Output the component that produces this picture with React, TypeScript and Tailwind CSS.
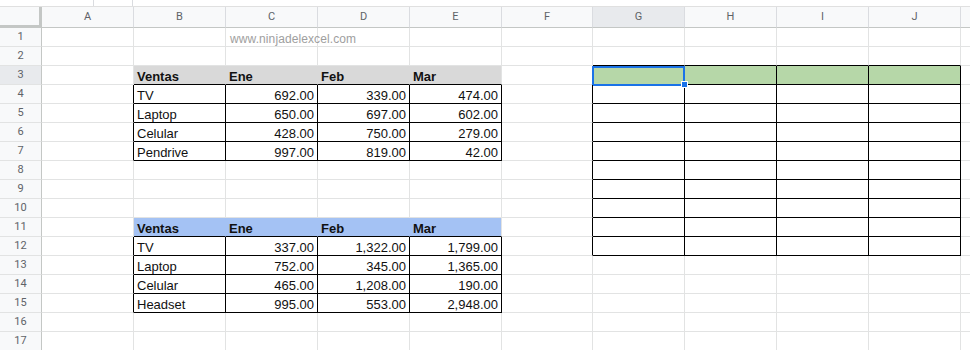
import React from 'react';

type Fill = 'gray' | 'blue' | 'green';
type Cell = { v: string; bold?: boolean; right?: boolean; muted?: boolean };

const COLS = ['A', 'B', 'C', 'D', 'E', 'F', 'G', 'H', 'I', 'J', 'K'];
const WIDTHS = ['w-[92px]', 'w-[92px]', 'w-[92px]', 'w-[92px]', 'w-[92px]', 'w-[91px]', 'w-[92px]', 'w-[92px]', 'w-[92px]', 'w-[92px]', 'w-[92px]'];
const ROWS = Array.from({ length: 17 }, (_, i) => i + 1);

const RIGHT = {
  black: 'border-r-black',
  grid: 'border-r-[#e2e3e3]',
  gray: 'border-r-[#d9d9d9]',
  blue: 'border-r-[#a4c2f4]',
  green: 'border-r-[#b6d7a8]',
};
const BOTTOM = {
  black: 'border-b-black',
  grid: 'border-b-[#e2e3e3]',
  gray: 'border-b-[#d9d9d9]',
  blue: 'border-b-[#a4c2f4]',
  green: 'border-b-[#b6d7a8]',
};
const BG = { gray: 'bg-[#d9d9d9]', blue: 'bg-[#a4c2f4]', green: 'bg-[#b6d7a8]' };

// bordered ranges, column index A = 0
const boxes = [
  { r1: 4, r2: 7, c1: 1, c2: 4 },
  { r1: 12, r2: 15, c1: 1, c2: 4 },
  { r1: 3, r2: 12, c1: 6, c2: 9 },
];
const inBox = (r: number, c: number) => boxes.some((b) => r >= b.r1 && r <= b.r2 && c >= b.c1 && c <= b.c2);

const fillOf = (r: number, c: number): Fill | null => {
  if (r === 3 && c >= 1 && c <= 4) return 'gray';
  if (r === 11 && c >= 1 && c <= 4) return 'blue';
  if (r === 3 && c >= 6 && c <= 9) return 'green';
  return null;
};

const cells: Record<string, Cell> = {
  C1: { v: 'www.ninjadelexcel.com', muted: true },
};

const addTable = (top: number, items: [string, string, string, string][]) => {
  ['Ventas', 'Ene', 'Feb', 'Mar'].forEach((h, i) => {
    cells[COLS[i + 1] + top] = { v: h, bold: true };
  });
  items.forEach((row, ri) => {
    row.forEach((v, ci) => {
      cells[COLS[ci + 1] + (top + 1 + ri)] = { v, right: ci > 0 };
    });
  });
};

addTable(3, [
  ['TV', '692.00', '339.00', '474.00'],
  ['Laptop', '650.00', '697.00', '602.00'],
  ['Celular', '428.00', '750.00', '279.00'],
  ['Pendrive', '997.00', '819.00', '42.00'],
]);
addTable(11, [
  ['TV', '337.00', '1,322.00', '1,799.00'],
  ['Laptop', '752.00', '345.00', '1,365.00'],
  ['Celular', '465.00', '1,208.00', '190.00'],
  ['Headset', '995.00', '553.00', '2,948.00'],
]);

const font = { fontFamily: '"Liberation Sans", Arial, sans-serif' };

const SheetCell = ({ r, c }: { r: number; c: number }) => {
  const fill = fillOf(r, c);
  const right = inBox(r, c) || inBox(r, c + 1) ? RIGHT.black : fill && fillOf(r, c + 1) === fill ? RIGHT[fill] : RIGHT.grid;
  const bottom = inBox(r, c) || inBox(r + 1, c) ? BOTTOM.black : fill && fillOf(r + 1, c) === fill ? BOTTOM[fill] : BOTTOM.grid;
  const cell = cells[COLS[c] + r];
  const selected = r === 3 && c === 6;

  return (
    <div
      className={`relative shrink-0 h-[19px] border-r border-b flex items-end px-[3px] whitespace-nowrap ${WIDTHS[c]} ${right} ${bottom} ${fill ? BG[fill] : ''} ${cell?.right ? 'justify-end' : ''}`}
    >
      {cell && (
        <span
          className={
            cell.muted
              ? 'text-[12px] leading-[14px] text-[#9e9e9e] pl-[1px] tracking-[0.1px]'
              : `text-[13px] leading-[15px] text-[#111] ${cell.bold ? 'font-bold' : ''}`
          }
        >
          {cell.v}
        </span>
      )}
      {selected && (
        <>
          <div className="absolute -left-[1px] top-0 w-[93px] h-[20px] border-2 border-[#1a73e8]" />
          <div className="absolute -right-[4px] -bottom-[4px] w-[7px] h-[7px] bg-[#1a73e8] border border-white z-10" />
        </>
      )}
    </div>
  );
};

export default function App() {
  return (
    <div className="w-[970px] h-[350px] overflow-hidden bg-white" style={font}>
      <div className="flex h-[7px] border-b border-[#e0e0e0]">
        <div className="w-[94px] shrink-0 border-r border-[#dadce0]" />
        <div className="w-[39px] shrink-0 border-r border-[#dadce0]" />
      </div>

      <div className="flex h-[21px]" style={{ fontFamily: 'Roboto, Arial, sans-serif' }}>
        <div className="w-[42px] shrink-0 bg-[#f8f9fa] border-r-[3px] border-b-[3px] border-[#c4c7c5]" />
        {COLS.map((col, c) => (
          <div
            key={col}
            className={`shrink-0 flex items-center justify-center text-[11px] text-[#5f6368] border-r border-b border-r-[#dadce0] border-b-[#c4c7c5] ${WIDTHS[c]} ${c === 6 ? 'bg-[#e8eaed]' : 'bg-[#f8f9fa]'}`}
          >
            {/* K sits past the right edge, only its border strip shows */}
            {col === 'K' ? '' : col}
          </div>
        ))}
      </div>

      {ROWS.map((r) => (
        <div key={r} className="flex">
          <div
            className={`w-[42px] h-[19px] shrink-0 flex items-center justify-center text-[11px] text-[#5f6368] border-r border-b border-r-[#c4c7c5] border-b-[#e2e3e3] ${r === 3 ? 'bg-[#e8eaed]' : 'bg-[#f8f9fa]'}`}
            style={{ fontFamily: 'Roboto, Arial, sans-serif' }}
          >
            {r}
          </div>
          {COLS.map((col, c) => (
            <SheetCell key={col} r={r} c={c} />
          ))}
        </div>
      ))}
    </div>
  );
}
